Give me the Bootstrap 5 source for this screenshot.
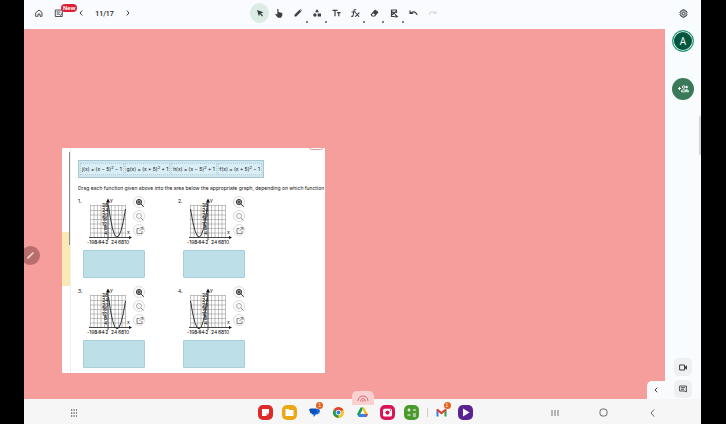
<!DOCTYPE html>
<html lang="en">
<head>
<meta charset="utf-8">
<meta name="viewport" content="width=device-width, initial-scale=1">
<title>Whiteboard 11/17</title>
<link href="https://cdn.jsdelivr.net/npm/bootstrap@5.3.0/dist/css/bootstrap.min.css" rel="stylesheet">
<style>
body { background: #000; font-family: "Open Sans", "Liberation Sans", sans-serif; padding: 0 25px 0 24px; }
svg { display: block; overflow: visible; }
.bare { border: 0; background: none; padding: 0; color: #3c4043; display: flex; align-items: center; justify-content: center; position: relative; }
.toolbar { height: 29px; background: #f9fbfe; padding: 0 0 3px 5px; }
.toolbar .bare { height: 20px; }
.step { width: 20px; }
.pages { width: 27px; font: 500 7px Roboto, sans-serif; color: #222; text-align: center; margin-top: 1px; }
.tools { width: 192px; margin-left: 112px; }
.tools .active { background: #dcebe4; border-radius: 50%; }
.more::after { content: ""; position: absolute; right: 0; bottom: 0; width: 2px; height: 2px; background: #555; border-radius: 50%; }
.new-tag { position: absolute; left: 12px; top: 1px; background: #dc1f35; color: #fff; border-radius: 4px; font: bold 6px/8px "Liberation Sans", sans-serif; padding: 0 2px; }
.gap-two { margin-left: 2px; }
.board { background: #f69e9b; overflow: hidden; }
.sheet { position: absolute; left: 38px; top: 119px; background: #fff; width: 263px; height: 225px; overflow: hidden; font: 5px/6px Inter, sans-serif; color: #111; }
.gutter { width: 9px; padding-top: 84px; border-right: 1px solid #eee; flex: none; }
.gutter-mark { height: 54px; background: #fae9b5; }
.thumb { position: absolute; left: 7px; top: 4px; width: 1px; height: 93px; background: #8c8c8c; }
.lip { position: absolute; right: 2px; top: -3px; width: 14px; height: 5px; border: 1px solid #d99; border-radius: 3px; }
.content-pane { padding: 12px 0 0 7px; white-space: nowrap; }
.functions { background: #cde5ef; border: 1px solid #a9c6d3; padding: 2px 1px; gap: 1px; width: 186px; height: 18px; }
.chip { background: #d9eef7; border: 1px dotted #b4ced9; flex: 1 1 auto; text-align: center; display: flex; align-items: center; justify-content: center; }
.chip sup { font-size: 4px; top: -2px; }
.prompt { margin: 7px 0 0; }
.problems { display: grid; grid-template-columns: 100px 100px; row-gap: 9px; margin-top: 5px; }
.problem { height: 81px; }
.num { width: 6px; padding-top: 2px; flex: none; }
.plot { width: 49px; height: 54px; flex: none; }
.plot text { font-size: 4px; fill: #444; }
.zooms { gap: 2px; }
.zooms .bare { width: 12px; height: 12px; border: 1px solid #ddd; border-radius: 50%; background: #fcfcfc; color: #222; }
.drop { width: 62px; height: 28px; margin-left: 5px; background: #bcdfe8; border: 1px solid #a8ced9; border-radius: 1px; }
.pen-fab { position: absolute; left: -3px; top: 217px; width: 19px; height: 19px; border-radius: 50%; background: #b86e6d; color: #f4d6d4; }
.collapse-tab { position: absolute; right: 0; bottom: 0; width: 18px; height: 18px; background: #fafbfc; border-radius: 5px 0 0 0; }
.side { width: 36px; background: #f9fcff; padding: 3px 0 1px; position: relative; }
.side-handle { position: absolute; right: 0; top: 116px; width: 2px; height: 39px; background: #d3d6d8; border-radius: 1px; }
.round { width: 22px; height: 22px; border-radius: 50%; }
.gear { width: 20px; height: 20px; }
.avatar { background: #00553e; color: #fff; font-size: 10px; margin-top: 7px; border: 1px solid #28a37c; box-shadow: inset 0 0 0 1px #d6efe6; }
.invite { background: #3a7a58; color: #fff; margin-top: 26px; }
.soft { width: 18px; height: 18px; background: #eef0f1; border-radius: 5px; }
.taskbar { display: grid; grid-template-columns: 1fr 224px 1fr; align-items: center; height: 25px; background: #f6f6f6; padding: 2px 0 0 6px; position: relative; }
.apps { width: 24px; margin-left: 32px; }
.dock-main { width: 170px; }
.dock-sep { width: 6px; height: 9px; }
.dock-sep::before { content: ""; display: block; margin-left: 3px; width: 1px; height: 9px; background: #ccc; }
.dock-end { width: 48px; }
.sysnav { padding-right: 24px; }
.sysnav .bare { width: 49px; color: #666; }
.alert-dot { position: absolute; left: 50%; margin-left: 2px; top: -3px; width: 7px; height: 7px; border-radius: 50%; background: #e8601c; color: #fff; font: 5px/7px "Liberation Sans", sans-serif; }
.pull { position: absolute; left: 328px; top: -8px; width: 22px; height: 14px; background: #f9d1d0; border-radius: 5px 5px 0 0; }
.s { fill: none; stroke: currentColor; stroke-linecap: round; stroke-linejoin: round; }
</style>
<script src="https://cdn.jsdelivr.net/npm/bootstrap@5.3.0/dist/js/bootstrap.bundle.min.js"></script>
</head>
<body class="d-flex flex-column min-vh-100">
<svg width="0" height="0" class="position-absolute" aria-hidden="true">
  <defs>
    <g id="axes">
      <path d="M6.500 9V41M10 9V41M13.500 9V41M17 9V41M20.500 9V41M27.500 9V41M31 9V41M34.500 9V41M38 9V41M41.500 9V41M6 9.500H42M6 14.500H42M6 19H42M6 23.500H42M6 28H42M6 32.500H42M6 37H42" fill="none" stroke="#999" stroke-width=".6"/>
      <path d="M24 5V44M5 41.500H46" stroke="#333" stroke-width=".9"/>
      <path d="M24 2.500l-2 4h4zM48 41.500l-3-1.500v3z" fill="#111"/>
      <text x="26" y="6">y</text><text x="43" y="38">x</text>
      <text x="18" y="11">28</text><text x="18" y="16">24</text><text x="18" y="21">20</text><text x="18" y="25">16</text><text x="18" y="30">12</text><text x="20" y="34">8</text><text x="20" y="39">4</text>
      <text x="3" y="48">-10</text><text x="8" y="48">-8</text><text x="12" y="48">-6</text><text x="15" y="48">-4</text><text x="19" y="48">-2</text>
      <text x="27" y="48">2</text><text x="30" y="48">4</text><text x="34" y="48">6</text><text x="37" y="48">8</text><text x="40" y="48">10</text>
    </g>
    <g id="zin"><circle cx="4" cy="4" r="2.600" fill="#bbb" stroke="#222" stroke-width=".9"/><path d="M6 6l2.500 2.500M3 4h2M4 3v2" class="s" stroke-width=".9"/></g>
    <g id="zout"><circle cx="4" cy="4" r="2.500" fill="none" stroke="#999" stroke-width=".8"/><path d="M6 6l2.500 2.500" stroke="#888" stroke-width=".9"/></g>
    <g id="pop"><path d="M4.500 2.500H2v5h5V5M4.500 5l3-3M5.500 1.500H8V4" fill="none" stroke="#555" stroke-width=".7"/></g>
  </defs>
</svg>
<div class="d-flex flex-grow-1">
  <main class="d-flex flex-column flex-grow-1">
    <header class="toolbar d-flex align-items-center">
      <button class="bare step" aria-label="Home"><svg width="8" height="8" viewBox="0 0 8 8"><path class="s" d="M1 3.500L4 1l3 2.500V7.300H5V5H3v2.300H1z" stroke-width=".9"/></svg></button>
      <button class="bare step" aria-label="Notes"><svg width="8" height="8" viewBox="0 0 8 8"><path class="s" d="M.7 1h6.600v6.500H.7zM2 3h3M2 5h2M4.500 5.500l1 1 1.500-2" stroke-width=".9"/></svg><span class="new-tag">New</span></button>
      <button class="bare step gap-two" aria-label="Previous page"><svg width="4" height="6" viewBox="0 0 4 6"><path class="s" d="M3 .8L1 3l2 2.200"/></svg></button>
      <span class="pages">11/17</span>
      <button class="bare step" aria-label="Next page"><svg width="4" height="6" viewBox="0 0 4 6"><path class="s" d="M1 .8L3 3 1 5.200"/></svg></button>
      <nav class="tools d-flex" aria-label="Tools">
        <button class="bare flex-fill w-100 active" aria-label="Select"><svg width="8" height="8" viewBox="0 0 8 8"><path d="M1 1l6.500 2.200L5 4.300l2 2.500-.9.800L4 5 2.900 7.300z" fill="currentColor"/></svg></button>
        <button class="bare flex-fill w-100" aria-label="Hand"><svg width="8" height="9" viewBox="0 0 8 9"><path d="M2.300 0h1.200v3l3.800 1v2.500L6 8.700H3L.2 5.500l.6-.7 1.500.8z" fill="currentColor"/></svg></button>
        <button class="bare flex-fill w-100 more" aria-label="Pen"><svg width="8" height="8" viewBox="0 0 8 8"><path d="M.5 7.500V5.800L5.500.8l1.700 1.700-5 5zM6 .4l.5-.4L8 1.500l-.4.500z" fill="currentColor"/></svg></button>
        <button class="bare flex-fill w-100 more" aria-label="Shapes"><svg width="8" height="8" viewBox="0 0 8 8"><path d="M4 0l2 3.300H2zM4.700 4.400H8v3.200H4.700z" fill="currentColor"/><circle cx="1.900" cy="6" r="1.700" fill="currentColor"/></svg></button>
        <button class="bare flex-fill w-100" aria-label="Text"><svg width="9" height="8" viewBox="0 0 9 8"><path d="M.5 1.300h5M3 1.300v6M5 3.700h3.600M6.800 3.700v3.600" fill="none" stroke="currentColor" stroke-width="1.200"/></svg></button>
        <button class="bare flex-fill w-100 more" aria-label="Formula"><svg width="9" height="8" viewBox="0 0 9 8"><path class="s" d="M4.700.7Q3 0 2.800 2.500L2.200 6Q2 7.800.6 7.200M1 3h3.300M4.800 4l3 3.300M8 4L4.500 7.300" stroke-width="1.100"/></svg></button>
        <button class="bare flex-fill w-100 more" aria-label="Eraser"><svg width="9" height="8" viewBox="0 0 9 8"><path d="M5 .5L8.500 3 5 7.500H2L.5 5.800z" fill="currentColor"/><path d="M2 5.500l1.500-1.300L5 5.800 4 6.700H2.700z" fill="#f9fbfe"/></svg></button>
        <button class="bare flex-fill w-100 more" aria-label="Insert"><svg width="9" height="9" viewBox="0 0 9 9"><path class="s" d="M6.500 3.500V1H1.500v6.500h3M2.500 3l1.500 2 1.500-2M2.500 5.500L4 3" stroke-width="1.200"/><path d="M5 4.500l3.500 3.500-2 .2-1 1z" fill="currentColor"/></svg></button>
        <button class="bare flex-fill w-100" aria-label="Undo"><svg width="9" height="6" viewBox="0 0 9 6"><path class="s" d="M2 3Q5.500 0 8 4.500M1 .8v2.700h2.700" stroke-width="1.200"/></svg></button>
        <button class="bare flex-fill w-100" aria-label="Redo" disabled><svg width="9" height="6" viewBox="0 0 9 6"><path d="M7 3Q3.500 0 1 4.500M8 .8v2.700H5.300" fill="none" stroke="#d9dcdf" stroke-width="1.200"/></svg></button>
      </nav>
    </header>
    <section class="board flex-grow-1 position-relative">
      <button class="bare pen-fab" aria-label="Quick pen"><svg width="9" height="9" viewBox="0 0 9 9"><path d="M1 8l.5-2L7 1l1 1-5.300 5.500z" fill="currentColor"/></svg></button>
      <article class="sheet d-flex">
        <div class="gutter"><div class="gutter-mark"></div></div>
        <span class="thumb"></span><span class="lip"></span>
        <div class="content-pane">
          <div class="functions d-flex">
            <span class="chip"><span>j(x) = (x − 5)<sup>2</sup> − 1</span></span>
            <span class="chip"><span>g(x) = (x + 5)<sup>2</sup> + 1</span></span>
            <span class="chip"><span>h(x) = (x − 5)<sup>2</sup> + 1</span></span>
            <span class="chip"><span>f(x) = (x + 5)<sup>2</sup> − 1</span></span>
          </div>
          <p class="prompt">Drag each function given above into the area below the appropriate graph, depending on which function</p>
          <div class="problems">
            <div class="problem"><div class="d-flex"><span class="num">1.</span>
              <svg class="plot" viewBox="0 0 49 54"><use href="#axes"/><path d="M24.500 9.500Q32.500 71 41.500 13" fill="none" stroke="#333"/></svg>
              <div class="zooms d-flex flex-column"><button class="bare" aria-label="Zoom in"><svg width="9" height="9"><use href="#zin"/></svg></button><button class="bare" aria-label="Zoom out"><svg width="9" height="9"><use href="#zout"/></svg></button><button class="bare" aria-label="Open graph"><svg width="9" height="9"><use href="#pop"/></svg></button></div></div>
              <div class="drop"></div></div>
            <div class="problem"><div class="d-flex"><span class="num">2.</span>
              <svg class="plot" viewBox="0 0 49 54"><use href="#axes"/><path d="M6.500 13Q15.500 71 23.500 9.500" fill="none" stroke="#333"/></svg>
              <div class="zooms d-flex flex-column"><button class="bare" aria-label="Zoom in"><svg width="9" height="9"><use href="#zin"/></svg></button><button class="bare" aria-label="Zoom out"><svg width="9" height="9"><use href="#zout"/></svg></button><button class="bare" aria-label="Open graph"><svg width="9" height="9"><use href="#pop"/></svg></button></div></div>
              <div class="drop"></div></div>
            <div class="problem"><div class="d-flex"><span class="num">3.</span>
              <svg class="plot" viewBox="0 0 49 54"><use href="#axes"/><path d="M24.500 11Q32.500 73 41.500 15" fill="none" stroke="#333"/></svg>
              <div class="zooms d-flex flex-column"><button class="bare" aria-label="Zoom in"><svg width="9" height="9"><use href="#zin"/></svg></button><button class="bare" aria-label="Zoom out"><svg width="9" height="9"><use href="#zout"/></svg></button><button class="bare" aria-label="Open graph"><svg width="9" height="9"><use href="#pop"/></svg></button></div></div>
              <div class="drop"></div></div>
            <div class="problem"><div class="d-flex"><span class="num">4.</span>
              <svg class="plot" viewBox="0 0 49 54"><use href="#axes"/><path d="M6.500 15Q15.500 73 23.500 11" fill="none" stroke="#333"/></svg>
              <div class="zooms d-flex flex-column"><button class="bare" aria-label="Zoom in"><svg width="9" height="9"><use href="#zin"/></svg></button><button class="bare" aria-label="Zoom out"><svg width="9" height="9"><use href="#zout"/></svg></button><button class="bare" aria-label="Open graph"><svg width="9" height="9"><use href="#pop"/></svg></button></div></div>
              <div class="drop"></div></div>
          </div>
        </div>
      </article>
      <button class="bare collapse-tab" aria-label="Collapse"><svg width="4" height="6" viewBox="0 0 4 6"><path class="s" d="M3 1L1 3l2 2"/></svg></button>
    </section>
  </main>
  <aside class="side d-flex flex-column align-items-center">
    <button class="bare gear" aria-label="Settings"><svg width="9" height="9" viewBox="0 0 9 9"><path d="M3.500.8h2l.4 1.100 1.200-.1 1 1.700-.7 1 .7 1-1 1.700-1.200-.1-.4 1.100h-2l-.4-1.100-1.200.1-1-1.700.7-1-.7-1 1-1.700 1.200.1z" fill="#b9bcbf" stroke="currentColor" stroke-width=".9"/><circle cx="4.500" cy="4.500" r="1.300" fill="#fff" stroke="currentColor" stroke-width=".9"/></svg></button>
    <button class="bare round avatar" aria-label="Account A">A</button>
    <button class="bare round invite" aria-label="Invite"><svg width="11" height="8" viewBox="0 0 11 8"><path d="M0 3.500h3M1.500 2v3" stroke="#fff" fill="none"/><circle cx="5.700" cy="2" r="1.300" fill="none" stroke="#fff" stroke-width=".9"/><circle cx="8.600" cy="2" r="1.200" fill="#fff"/><path d="M3.500 6.800V5.500Q5.700 4 8 5.500v1.300zM8.300 4.500q2.200 0 2.200 2.300H9z" fill="none" stroke="#fff" stroke-width=".9"/></svg></button>
    <button class="bare soft mt-auto mb-1" aria-label="Video"><svg width="8" height="7" viewBox="0 0 8 7"><path d="M.6 1h4.900v5H.6z" fill="none" stroke="currentColor"/><path d="M5.500 3L8 1.300v4.400L5.500 4z" fill="currentColor"/></svg></button>
    <button class="bare soft" aria-label="Chat"><svg width="8" height="8" viewBox="0 0 8 8"><path d="M.6 1h6.800v6L6 6H.6zM2 2.700h4M2 4.300h3" fill="none" stroke="currentColor" stroke-width=".9"/></svg></button>
    <span class="side-handle"></span>
  </aside>
</div>
<footer class="taskbar">
  <span class="pull d-flex justify-content-center pt-1"><svg width="12" height="7" viewBox="0 0 12 7"><path d="M1 6Q1.500 1 6 1t5 5M3.500 6.500Q4 3.500 6 3.500t2.500 3M6 5v2" fill="none" stroke="#df5a6d" stroke-width=".9"/></svg></span>
  <button class="bare apps" aria-label="All apps"><svg width="8" height="8" viewBox="0 0 8 8"><path d="M1 1h6M1 4h6M1 7h6" stroke="#666" stroke-width="1.300" stroke-dasharray="1.300 1.200" fill="none"/></svg></button>
  <div class="d-flex align-items-center">
    <div class="dock-main d-flex">
      <button class="bare w-100" aria-label="Notes app"><svg width="15" height="15" viewBox="0 0 15 15"><rect width="15" height="15" rx="5" fill="#dc2b2a"/><path d="M4 4h7v4L8 11H4z" fill="#fff"/><path d="M8.200 11V8.200H11z" fill="#f6aaa8"/></svg></button>
      <button class="bare w-100" aria-label="Files"><svg width="15" height="15" viewBox="0 0 15 15"><rect width="15" height="15" rx="5" fill="#eca715"/><path d="M3.500 4h3l1 1h4v6h-8z" fill="#fff"/></svg></button>
      <button class="bare w-100" aria-label="Messages"><svg width="15" height="15" viewBox="0 0 15 15"><path d="M5 4h6q2 0 2 2t-2 3l-2 .5-2.500 2.500V9.500H5z" fill="#1969d9"/><path d="M3.500 3.500h6v5h-5Q3 8.500 3 7L2 4.500z" fill="#0b4fb8"/></svg><span class="alert-dot">1</span></button>
      <button class="bare w-100" aria-label="Chrome"><svg width="15" height="15" viewBox="0 0 15 15"><circle cx="7.500" cy="7.500" r="5.500" fill="#f9c51b"/><path d="M7.500 7.500L2.700 4.700A5.500 5.500 0 0 1 12.300 4.700z" fill="#df3e32"/><path d="M7.500 7.500L2.700 4.700A5.500 5.500 0 0 0 7.500 13z" fill="#279a50"/><circle cx="7.500" cy="7.500" r="2.700" fill="#fff"/><circle cx="7.500" cy="7.500" r="2" fill="#347cec"/></svg></button>
      <button class="bare w-100" aria-label="Drive"><svg width="15" height="15" viewBox="0 0 15 15"><path d="M5.500 2.500h3l-4.500 9-2-2z" fill="#159f57"/><path d="M7 2.500h2l4 7h-3z" fill="#fbbe12"/><path d="M4.500 9H13l-1.500 3h-8z" fill="#3b7ded"/><path d="M10.500 9H13l-1.500 3z" fill="#dd4437"/></svg></button>
      <button class="bare w-100" aria-label="Camera"><svg width="15" height="15" viewBox="0 0 15 15"><rect width="15" height="15" rx="5" fill="#da1457"/><rect x="3" y="3.700" width="9" height="7.800" rx="1.500" fill="#fff"/><circle cx="7.500" cy="7.600" r="2.100" fill="#da1457"/><circle cx="10.500" cy="5.200" r=".7" fill="#da1457"/></svg></button>
      <button class="bare w-100" aria-label="Calculator"><svg width="15" height="15" viewBox="0 0 15 15"><rect width="15" height="15" rx="5" fill="#4a9a2e"/><path d="M3.500 5h3M5 3.500v3M9 5h3M3.500 10h3M9 9h3M9 11h3" stroke="#fff" stroke-width="1.200"/></svg></button>
    </div>
    <span class="dock-sep"></span>
    <div class="dock-end d-flex">
      <button class="bare w-100" aria-label="Gmail"><svg width="15" height="15" viewBox="0 0 15 15"><path d="M3.500 11.500V4.500" stroke="#3978e5" stroke-width="2"/><path d="M11.500 11.500V4.500" stroke="#2ba250" stroke-width="2"/><path d="M3 4.500l4.500 3.500 4.500-3.500" fill="none" stroke="#dc4335" stroke-width="2.200"/></svg><span class="alert-dot">1</span></button>
      <button class="bare w-100" aria-label="Video player"><svg width="15" height="15" viewBox="0 0 15 15"><rect width="15" height="15" rx="5" fill="#5b2390"/><path d="M5 3.500l6.500 4L5 11.500z" fill="#fff"/></svg></button>
    </div>
  </div>
  <nav class="sysnav d-flex justify-content-end" aria-label="System">
    <button class="bare" aria-label="Recents"><svg width="8" height="8" viewBox="0 0 8 8"><path d="M1 1v6M4 1v6M7 1v6" stroke="currentColor" stroke-width=".9"/></svg></button>
    <button class="bare" aria-label="Home screen"><svg width="9" height="9" viewBox="0 0 9 9"><rect x="1" y="1" width="7" height="7" rx="2.500" fill="none" stroke="currentColor"/></svg></button>
    <button class="bare" aria-label="Back"><svg width="5" height="8" viewBox="0 0 5 8"><path class="s" d="M4 .7L1 4l3 3.300"/></svg></button>
  </nav>
</footer>
</body>
</html>
